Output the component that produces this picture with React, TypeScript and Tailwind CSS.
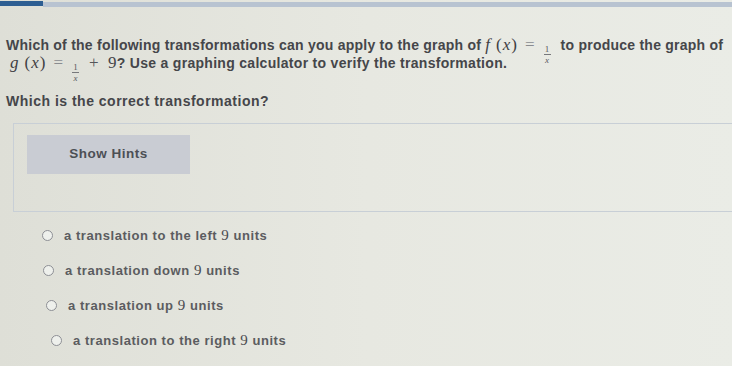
import React from "react";

const serif = { fontFamily: '"Liberation Serif", "DejaVu Serif", serif' };

function Frac() {
  return (
    <span
      className="inline-flex flex-col items-center leading-none mx-[1px]"
      style={{ verticalAlign: "-2px" }}
    >
      <span className="text-[9px] leading-[8px] not-italic text-[#58595c]">1</span>
      <span className="block h-px w-[7px] bg-[#77787b] my-[1px]" />
      <span className="text-[9px] leading-[8px] italic text-[#58595c]">x</span>
    </span>
  );
}

function Fx({ name }: { name: string }) {
  return (
    <span className="font-normal text-[17px] text-[#3f4044] tracking-normal" style={serif}>
      <i>{name}</i>
      <span className="ml-[6px]">(</span>
      <i className="mx-[1px]">x</i>
      <span>)</span>
      <span className="mx-[8px] text-[#8a8c90]">=</span>
      <Frac />
    </span>
  );
}

function Nine() {
  return (
    <span className="font-normal text-[15px] text-[#4a4b4f]" style={serif}>
      9
    </span>
  );
}

function Radio({ label, indent }: { label: React.ReactNode; indent: string }) {
  return (
    <div className={`flex items-center h-[35px] ${indent}`}>
      <span className="w-[11px] h-[11px] rounded-full border-[1.5px] border-[#8d8f95] bg-[#eef0ec] mr-[11px] shrink-0" />
      <span className="text-[13px] text-[#5b5c60] font-semibold tracking-[0.55px] whitespace-nowrap">
        {label}
      </span>
    </div>
  );
}

export default function App() {
  return (
    <div
      className="w-[732px] h-[366px] overflow-hidden bg-gradient-to-r from-[#dedfd7] via-[#e7e8e1] to-[#eaece6] text-[#45464a]"
      style={{ fontFamily: '"Liberation Sans", Arial, sans-serif' }}
    >
      <div className="flex h-[7px] pt-[1px]">
        <div className="w-[43px] h-[5px] bg-[#2d5e92]" />
        <div className="flex-1 h-[5px] mt-[1px] bg-[#b8c3d1]" />
      </div>

      <div className="pl-[6px] pt-[29px] text-[14px] font-bold">
        <div className="h-[18px] leading-[18px] whitespace-nowrap tracking-[0.24px]">
          Which of the following transformations can you apply to the graph of{" "}
          <Fx name="f" />
          <span className="ml-[9px]">to produce the graph of</span>
        </div>
        <div className="h-[18px] leading-[18px] whitespace-nowrap pl-[4px] tracking-[0.3px]">
          <Fx name="g" />
          <span className="mx-[9px] font-normal text-[17px] text-[#55565a]" style={serif}>
            +
          </span>
          <span className="font-normal text-[17px]" style={serif}>
            9
          </span>
          ? Use a graphing calculator to verify the transformation.
        </div>
        <div className="h-[18px] leading-[18px] mt-[20px] whitespace-nowrap tracking-[0.5px]">
          Which is the correct transformation?
        </div>
      </div>

      <div className="ml-[13px] mt-[13px] h-[89px] border border-r-0 border-[#c8cfd6] pt-[11px] pl-[13px]">
        <div className="w-[163px] h-[39px] bg-[#c9ccd3] flex items-center justify-center text-[13.5px] font-semibold text-[#4c4f55] tracking-[0.5px]">
          Show Hints
        </div>
      </div>

      <div className="pt-[6px]">
        <Radio indent="pl-[42px]" label={<>a translation to the left <Nine /> units</>} />
        <Radio indent="pl-[43px]" label={<>a translation down <Nine /> units</>} />
        <Radio indent="pl-[46px]" label={<>a translation up <Nine /> units</>} />
        <Radio indent="pl-[51px]" label={<>a translation to the right <Nine /> units</>} />
      </div>
    </div>
  );
}
